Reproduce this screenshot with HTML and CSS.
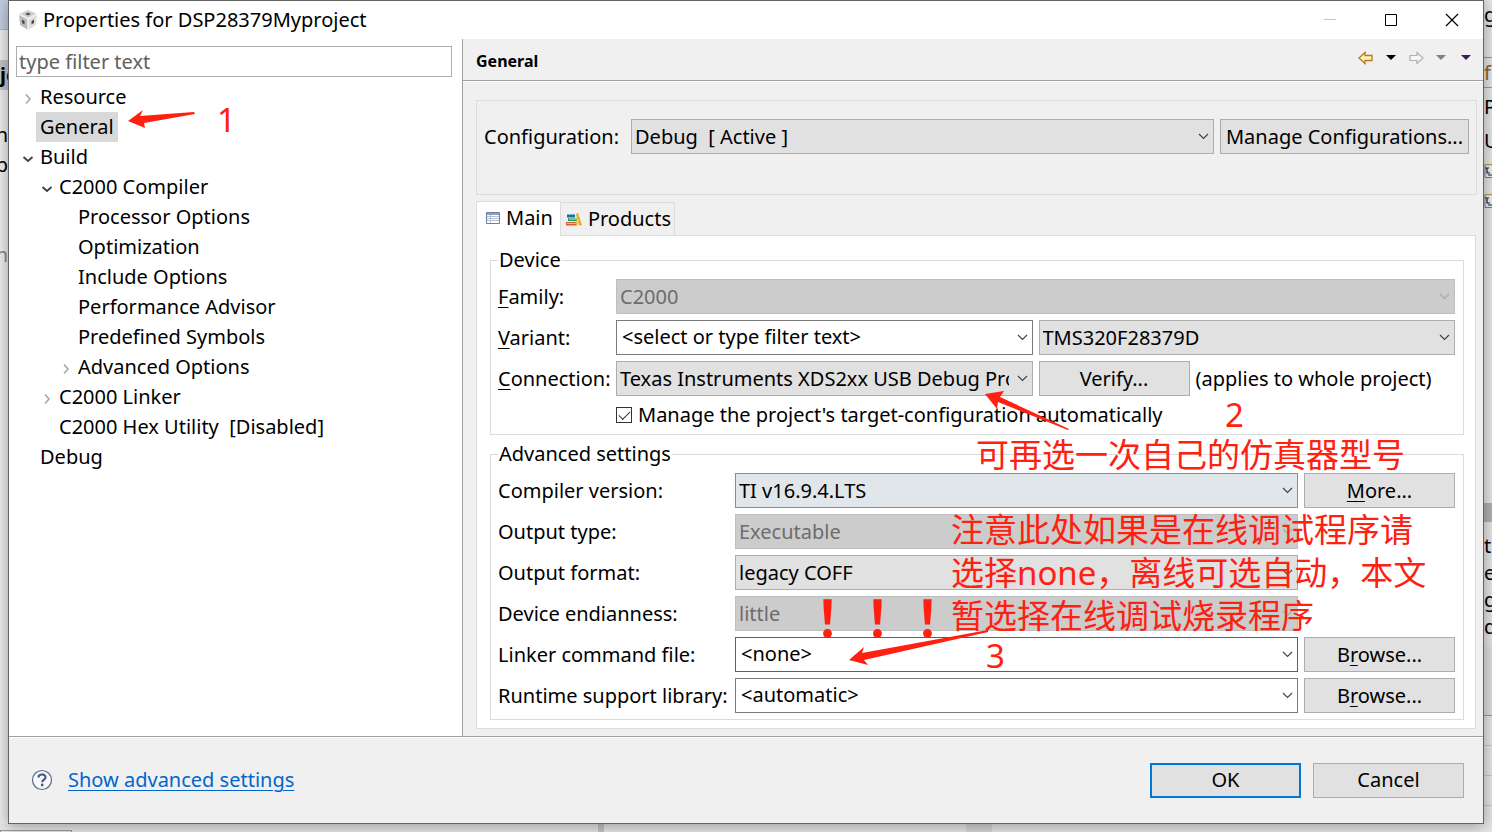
FILE: index.html
```html
<!DOCTYPE html>
<html lang="en">

<head>
    <meta charset="UTF-8">
    <meta name="viewport" content="width=device-width, initial-scale=1.0">
    <title>Properties for DSP28379Myproject</title>
    <link rel="stylesheet" href="styles.css">
</head>

<body>

    <!-- Shared icons -->
    <svg class="sprite" width="0" height="0" aria-hidden="true">
        <symbol id="chevron" viewBox="0 0 11 7">
            <path d="M1 1l4.500 4.500L10 1" fill="none" stroke="currentColor" stroke-width="1.200" />
        </symbol>
        <symbol id="tree-open" viewBox="0 0 12 12">
            <path d="M1.500 4L6 8l4.500-4" fill="none" stroke="#404040" stroke-width="1.800" />
        </symbol>
        <symbol id="tree-closed" viewBox="0 0 12 12">
            <path d="M4 1.500L8 6l-4 4.500" fill="none" stroke="#a6a6a6" stroke-width="1.600" />
        </symbol>
        <symbol id="caret" viewBox="0 0 10 5">
            <path d="M0 0h10L5 5z" fill="currentColor" />
        </symbol>
        <symbol id="file" viewBox="0 0 14 14">
            <path d="M1 .5h8l4 4v9H1z" fill="#e8edf6" stroke="#6b7fa8" />
            <path d="M1 .5h7l4 4" fill="none" stroke="#c49a3c" stroke-width="1.500" />
            <path d="M1 4h4M3 4v5h3M4 11h4" fill="none" stroke="#222" stroke-width="1.200" />
        </symbol>
    </svg>

    <!-- Window behind, left edge -->
    <div class="behind behind-left">
        <div class="strip-title"></div>
        <div class="strip-gap"></div>
        <div class="strip-row selected">je</div>
        <div class="strip-gap"></div>
        <div class="strip-row">n</div>
        <div class="strip-row">p</div>
        <div class="strip-gap tall"></div>
        <div class="strip-row muted">n</div>
    </div>

    <main class="dialog">
        <header class="titlebar">
            <svg class="app-icon" width="20" height="20" viewBox="0 0 20 20">
                <path d="M10 0l9 4-9 5-9-5z" fill="#d0d0d0" />
                <path d="M1 4l9 5v11l-8-5z" fill="#bcbcbc" />
                <path d="M19 4l-9 5v11l8-5z" fill="#dedede" />
                <path d="M10 2.500l3 1.500-3 1.500L7 4z" fill="#555" />
                <path d="M4 9.500l2.500 1.500v3.500L4 13z" fill="#4a4a4a" />
                <path d="M16 9.500L13.500 11v3.500L16 13z" fill="#4a4a4a" />
                <path d="M1 4l9 5 9-5M10 9v11" fill="none" stroke="#f2f2f2" stroke-width="1.500" />
            </svg>
            <h1>Properties for DSP28379Myproject</h1>
            <div class="window-buttons">
                <button type="button" aria-label="Minimize" disabled>
                    <svg width="14" height="14" viewBox="0 0 14 14"><path d="M1 6.500h12" stroke="#c4c4c4" /></svg>
                </button>
                <button type="button" aria-label="Maximize">
                    <svg width="14" height="14" viewBox="0 0 14 14"><path d="M1.500 1.500h11v11h-11z" fill="none" stroke="#000" /></svg>
                </button>
                <button type="button" aria-label="Close">
                    <svg width="14" height="14" viewBox="0 0 14 14"><path d="M1 1l12 12M13 1L1 13" stroke="#000" stroke-width="1.200" /></svg>
                </button>
            </div>
        </header>

        <div class="content">
            <nav class="sidebar">
                <input type="text" class="filter" placeholder="type filter text" aria-label="type filter text">
                <ul class="tree">
                    <li><svg width="12" height="12"><use href="#tree-closed" /></svg><a href="#resource">Resource</a></li>
                    <li><a href="#general" class="active">General</a></li>
                    <li><svg width="12" height="12"><use href="#tree-open" /></svg><a href="#build">Build</a></li>
                    <li class="level-1"><svg width="12" height="12"><use href="#tree-open" /></svg><a href="#compiler">C2000 Compiler</a></li>
                    <li class="level-2"><a href="#processor">Processor Options</a></li>
                    <li class="level-2"><a href="#optimization">Optimization</a></li>
                    <li class="level-2"><a href="#include">Include Options</a></li>
                    <li class="level-2"><a href="#performance">Performance Advisor</a></li>
                    <li class="level-2"><a href="#symbols">Predefined Symbols</a></li>
                    <li class="level-2"><svg width="12" height="12"><use href="#tree-closed" /></svg><a href="#advanced">Advanced Options</a></li>
                    <li class="level-1"><svg width="12" height="12"><use href="#tree-closed" /></svg><a href="#linker">C2000 Linker</a></li>
                    <li class="level-1"><a href="#hex">C2000 Hex Utility&nbsp; [Disabled]</a></li>
                    <li><a href="#debug">Debug</a></li>
                </ul>
            </nav>

            <section class="page">
                <div class="page-header">
                    <h2>General</h2>
                    <div class="history">
                        <button type="button" aria-label="Back">
                            <svg width="16" height="14" viewBox="0 0 16 14"><path d="M1 7l6-5.500v3h7v5H7v3z" fill="#fff3c4" stroke="#b87a14" stroke-width="1.300" /></svg>
                        </button>
                        <button type="button" class="drop" aria-label="Back history"><svg width="10" height="5"><use href="#caret" /></svg></button>
                        <button type="button" aria-label="Forward">
                            <svg width="16" height="14" viewBox="0 0 16 14"><path d="M15 7L9 1.500v3H2v5h7v3z" fill="#f6f6f6" stroke="#b0b0b0" stroke-width="1.200" /></svg>
                        </button>
                        <button type="button" class="drop grey" aria-label="Forward history"><svg width="10" height="5"><use href="#caret" /></svg></button>
                        <button type="button" class="drop purple" aria-label="Menu"><svg width="10" height="5"><use href="#caret" /></svg></button>
                    </div>
                </div>

                <div class="configuration">
                    <label for="configuration">Configuration:</label>
                    <div class="combo">
                        <select id="configuration"><option>Debug&nbsp; [ Active ]</option></select>
                        <svg width="11" height="7"><use href="#chevron" /></svg>
                    </div>
                    <button type="button" class="btn">Manage Configurations...</button>
                </div>

                <div class="tabs" role="tablist">
                    <button type="button" class="tab current" role="tab" aria-selected="true">
                        <svg width="14" height="12" viewBox="0 0 14 12">
                            <path d="M.5.5h13v11H.5z" fill="#fff" stroke="#6c7fa0" />
                            <path d="M1 1h12v2H1z" fill="#8fa0bd" />
                            <path d="M1 4.500h12M1 6.500h12M1 8.500h12M4.500 3v8" stroke="#b4bfd0" />
                        </svg>
                        Main
                    </button>
                    <button type="button" class="tab" role="tab" aria-selected="false">
                        <svg width="16" height="13" viewBox="0 0 16 13">
                            <path d="M1 1.500h8v3H1z" fill="#1c6f9c" />
                            <path d="M2 5h9v3H2z" fill="#1f9a6b" />
                            <path d="M3 6h8" stroke="#c8ecd9" />
                            <path d="M0 9h11v3.500H0z" fill="#d2622c" />
                            <path d="M1 10.500h9" stroke="#f1b98e" />
                            <path d="M10 1l2-1 4 12-3 .5z" fill="#f0a81c" />
                            <path d="M12 6l-1 6" stroke="#f7cf4a" stroke-width="2" />
                        </svg>
                        Products
                    </button>
                </div>

                <div class="pane">
                    <fieldset class="device">
                        <legend>Device</legend>
                        <div class="grid">
                            <label for="family"><u>F</u>amily:</label>
                            <div class="combo wide">
                                <select id="family" disabled><option>C2000</option></select>
                                <svg width="11" height="7"><use href="#chevron" /></svg>
                            </div>

                            <label for="variant"><u>V</u>ariant:</label>
                            <div class="combo">
                                <input type="text" id="variant" value="&lt;select or type filter text&gt;">
                                <svg width="11" height="7"><use href="#chevron" /></svg>
                            </div>
                            <div class="combo">
                                <select aria-label="Device variant"><option>TMS320F28379D</option></select>
                                <svg width="11" height="7"><use href="#chevron" /></svg>
                            </div>

                            <label for="connection"><u>C</u>onnection:</label>
                            <div class="combo">
                                <select id="connection"><option>Texas Instruments XDS2xx USB Debug Probe</option></select>
                                <svg width="11" height="7"><use href="#chevron" /></svg>
                            </div>
                            <div class="verify">
                                <button type="button" class="btn">Verify...</button>
                                <span>(applies to whole project)</span>
                            </div>

                            <label class="check">
                                <input type="checkbox" checked>
                                Manage the project's target-configuration automatically
                            </label>
                        </div>
                    </fieldset>

                    <fieldset class="advanced">
                        <legend>Advanced settings</legend>
                        <div class="grid">
                            <label for="compiler-version">Compiler version:</label>
                            <div class="combo hot">
                                <select id="compiler-version"><option>TI v16.9.4.LTS</option></select>
                                <svg width="11" height="7"><use href="#chevron" /></svg>
                            </div>
                            <button type="button" class="btn"><u>M</u>ore...</button>

                            <label for="output-type">Output type:</label>
                            <div class="combo">
                                <select id="output-type" disabled><option>Executable</option></select>
                                <svg width="11" height="7"><use href="#chevron" /></svg>
                            </div>

                            <label for="output-format">Output format:</label>
                            <div class="combo">
                                <select id="output-format"><option>legacy COFF</option></select>
                                <svg width="11" height="7"><use href="#chevron" /></svg>
                            </div>

                            <label for="endianness">Device endianness:</label>
                            <div class="combo">
                                <select id="endianness" disabled><option>little</option></select>
                                <svg width="11" height="7"><use href="#chevron" /></svg>
                            </div>

                            <label for="linker-file">Linker command file:</label>
                            <div class="combo focused">
                                <input type="text" id="linker-file" value="&lt;none&gt;">
                                <svg width="11" height="7"><use href="#chevron" /></svg>
                            </div>
                            <button type="button" class="btn">B<u>r</u>owse...</button>

                            <label for="runtime">Runtime support library:</label>
                            <div class="combo">
                                <input type="text" id="runtime" value="&lt;automatic&gt;">
                                <svg width="11" height="7"><use href="#chevron" /></svg>
                            </div>
                            <button type="button" class="btn">B<u>r</u>owse...</button>
                        </div>
                    </fieldset>
                </div>
            </section>
        </div>

        <footer class="actions">
            <svg width="22" height="22" viewBox="0 0 22 22">
                <circle cx="11" cy="11" r="9.500" fill="#f7f8fb" stroke="#5a6a8c" stroke-width="1.200" />
                <path d="M7.500 8.500C7.500 4.500 14.500 4.500 14.500 8.300c0 2.400-3.300 2.500-3.300 5" fill="none" stroke="#4c5d82" stroke-width="2.200" />
                <circle cx="11.200" cy="16" r="1.400" fill="#4c5d82" />
            </svg>
            <a href="#advanced-settings">Show advanced settings</a>
            <button type="button" class="btn primary">OK</button>
            <button type="button" class="btn">Cancel</button>
        </footer>
    </main>

    <!-- Window behind, right edge -->
    <div class="behind behind-right">
        <div class="strip-head">g</div>
        <div class="strip-row tab-text">f</div>
        <div class="strip-row first">P</div>
        <div class="strip-row">U</div>
        <div class="strip-row"><svg width="14" height="14"><use href="#file" /></svg></div>
        <div class="strip-row"><svg width="14" height="14"><use href="#file" /></svg></div>
        <div class="strip-fill"></div>
        <div class="strip-bar"></div>
        <div class="strip-log">
            <span>t</span>
            <span>e</span>
            <span>g</span>
            <span>d</span>
        </div>
        <div class="strip-panel"></div>
        <div class="strip-rows"><i></i><i></i><i></i></div>
    </div>

    <div class="behind behind-bottom">
        <div class="corner"></div>
        <div class="divider"></div>
        <div class="divider light"></div>
    </div>

    <!-- Notes drawn over the dialog -->
    <div class="notes">
        <svg class="arrows" width="1492" height="832" viewBox="0 0 1492 832">
            <path d="M128 121l15-11-3 6 54-4 1 2-51 9 1 5z" />
            <path d="M985 394l19-3-4 6 69 32-1 1-70-28-1 7z" />
            <path d="M849 660l15-13-2 6 126-23v2l-124 28 4 5z" />
        </svg>
        <span class="note number one">1</span>
        <span class="note number two">2</span>
        <span class="note number three">3</span>
        <p class="note probe">可再选一次自己的仿真器型号</p>
        <p class="note linker">注意此处如果是在线调试程序请<br>选择none，离线可选自动，本文<br>暂选择在线调试烧录程序</p>
        <span class="note bang">！！！</span>
    </div>

</body>

</html>
```

FILE: styles.css
```css
* {
    margin: 0;
    padding: 0;
    box-sizing: border-box;
}

body {
    font-family: 'Noto Sans', 'Noto Sans CJK SC', sans-serif;
    font-size: 20px;
    line-height: 30px;
    color: #000;
    background-color: #e6e6e6;
    display: grid;
    grid-template-columns: 8px minmax(0, 1fr) 8px;
    grid-template-rows: 1fr 8px;
    min-height: 100vh;
    position: relative;
    overflow: hidden;
}

button,
input,
select {
    font: inherit;
    color: inherit;
    border-radius: 0;
    outline: none;
}

.sprite {
    position: absolute;
}

/* Window behind */
.behind {
    overflow: hidden;
    white-space: nowrap;
}

.behind-left {
    background-color: #ececec;
    display: flex;
    flex-direction: column;
}

.behind-left .strip-row {
    display: flex;
    justify-content: flex-end;
}

.behind-left .strip-row.selected {
    justify-content: flex-start;
    background-color: #c4c4c4;
    font-weight: 700;
}

.strip-title {
    height: 30px;
    background-color: #c3cde0;
    border-bottom: 1px solid #a9b3c5;
}

.strip-gap {
    height: 30px;
}

.strip-gap.tall {
    height: 60px;
}

.strip-row {
    display: flex;
    align-items: center;
    height: 30px;
}

.strip-row.muted {
    color: #888;
}

.behind-right {
    background-color: #e4e4e4;
    display: flex;
    flex-direction: column;
}

.strip-row svg {
    flex: none;
}

.strip-head {
    height: 58px;
    border-bottom: 1px solid #999;
}

.strip-row.tab-text {
    color: #9a6020;
    border-bottom: 1px solid #999;
}

.strip-row.first {
    margin: 4px 0;
}

.strip-fill {
    height: 287px;
}

.strip-bar {
    height: 19px;
    background-color: #b0b0b0;
}

.strip-log {
    display: flex;
    flex-direction: column;
    padding-top: 10px;
    height: 125px;
    line-height: 27px;
}

.strip-panel {
    height: 69px;
    background-color: #dcdcdc;
    border-bottom: 1px solid #999;
}

.strip-rows i {
    display: block;
    height: 30px;
    border-bottom: 1px solid #c8c8c8;
}

.behind-bottom {
    grid-column: 1 / -1;
    display: flex;
}

.corner {
    width: 72px;
    height: 4px;
    margin-top: 6px;
    border: 1px solid #999;
}

.divider {
    margin-left: 526px;
    width: 6px;
    background-color: #c4c4c4;
}

.divider.light {
    margin-left: 362px;
    width: 26px;
    background-color: #d6d6d6;
}

/* Dialog */
.dialog {
    display: flex;
    flex-direction: column;
    background-color: #f0f0f0;
    border: 1px solid #646464;
    box-shadow: 0 2px 14px rgba(0, 0, 0, 0.35);
    position: relative;
}

.titlebar {
    display: flex;
    align-items: center;
    gap: 5px;
    height: 38px;
    padding: 0 1px 0 9px;
    background-color: #fff;
}

.titlebar h1 {
    font-size: 20px;
    font-weight: 400;
}

.window-buttons {
    display: flex;
    margin-left: auto;
}

.window-buttons button {
    width: 61px;
    height: 38px;
    border: none;
    background: none;
}

.content {
    display: flex;
    flex: 1;
}

/* Left tree */
.sidebar {
    width: 454px;
    padding: 7px 10px 0 7px;
    background-color: #fff;
    border-right: 1px solid #a0a0a0;
}

.filter {
    display: block;
    width: 100%;
    height: 31px;
    padding: 0 2px;
    border: 1px solid #adadb3;
}

.filter::placeholder {
    color: #606060;
    opacity: 1;
}

.tree {
    list-style: none;
    padding-top: 5px;
}

.tree li {
    display: grid;
    grid-template-columns: 20px auto;
    justify-content: start;
    align-items: center;
    height: 30px;
}

.tree li svg {
    margin-left: 6px;
    margin-top: 4px;
}

.tree li.level-1 {
    padding-left: 19px;
}

.tree li.level-2 {
    padding-left: 38px;
}

.tree a {
    grid-column: 2;
    padding: 0 4px;
    color: #000;
    text-decoration: none;
}

.tree a.active {
    background-color: #d9d9d9;
}

/* Right page */
.page {
    flex: 1;
    min-width: 0;
}

.page-header {
    display: flex;
    justify-content: space-between;
    align-items: center;
    height: 42px;
    padding: 2px 12px 0 13px;
    border-bottom: 1px solid #a0a0a0;
    box-shadow: 0 1px 0 #fff;
}

.page-header h2 {
    font-size: 16px;
    font-weight: 700;
}

.history {
    display: flex;
    align-items: center;
    gap: 12px;
    padding-bottom: 6px;
}

.history button {
    display: flex;
    border: none;
    background: none;
}

.history .grey {
    color: #808080;
}

.history .purple {
    color: #3c1a5c;
    margin-left: 3px;
}

.configuration {
    display: grid;
    grid-template-columns: 141px 1fr 249px;
    gap: 6px;
    align-items: center;
    margin: 19px 6px 0 13px;
    padding: 18px 7px 40px;
    border: 1px solid #dcdcdc;
}

label {
    white-space: nowrap;
}

u {
    text-decoration-thickness: 1px;
    text-underline-offset: 3px;
}

.btn {
    height: 35px;
    min-width: 151px;
    background-color: #e1e1e1;
    border: 1px solid #adadad;
    white-space: nowrap;
}

.btn.primary {
    border: 2px solid #0078d7;
}

/* Drop-downs: the arrow shares the cell of the field */
.combo {
    display: grid;
    grid-template-columns: minmax(0, 1fr);
    align-items: center;
    color: #000;
}

.combo > * {
    grid-area: 1 / 1;
}

.combo svg {
    justify-self: end;
    margin-right: 5px;
    color: #444;
    pointer-events: none;
}

.combo select,
.combo input {
    width: 100%;
    height: 35px;
    padding: 0 23px 0 3px;
    appearance: none;
    background-color: #e1e1e1;
    border: 1px solid #adadad;
}

.combo input {
    padding-left: 5px;
    padding-bottom: 2px;
    background-color: #fff;
    border-color: #7a7a7a;
}

.combo select:disabled {
    background-color: #ccc;
    border-color: #bfbfbf;
    color: #6d6d6d;
    opacity: 1;
}

.combo select:disabled + svg {
    color: #a8a8a8;
}

.combo.hot select {
    background-color: #e0e6ea;
    border-color: #6a94b8;
}

.combo.focused input {
    border-color: #0078d7;
}

.tabs {
    display: flex;
    align-items: flex-end;
    margin: 6px 0 0 13px;
}

.tab {
    display: flex;
    align-items: center;
    gap: 6px;
    height: 33px;
    padding: 0 3px 0 5px;
    background-color: #f0f0f0;
    border: 1px solid #dcdcdc;
    border-left: none;
    border-bottom: none;
}

.tab svg {
    flex: none;
}

.tab.current {
    height: 35px;
    padding: 0 7px 2px 9px;
    background-color: #fff;
    border-left: 1px solid #dcdcdc;
    margin-bottom: -1px;
    position: relative;
    z-index: 1;
}

.pane {
    display: flex;
    flex-direction: column;
    gap: 5px;
    margin: 0 7px 6px 13px;
    padding: 10px 11px 8px 13px;
    background-color: #fff;
    border: 1px solid #dcdcdc;
}

fieldset {
    min-width: 0;
    border: 1px solid #dcdcdc;
    padding: 5px 8px 6px 7px;
}

legend {
    padding: 0 1px;
    line-height: 28px;
}

.grid {
    display: grid;
    gap: 6px;
    align-items: center;
}

.device .grid {
    grid-template-columns: 112px minmax(0, 1fr) minmax(0, 1fr);
}

.advanced .grid {
    grid-template-columns: 231px minmax(0, 1fr) 151px;
}

.grid > label {
    grid-column: 1;
}

.combo.wide {
    grid-column: 2 / -1;
}

.verify {
    display: flex;
    align-items: center;
    gap: 6px;
    white-space: nowrap;
}

.grid > .check {
    grid-column: 2 / -1;
    display: flex;
    align-items: center;
    gap: 6px;
    line-height: 26px;
}

.check input {
    appearance: none;
    width: 16px;
    height: 16px;
    border: 1px solid #333;
    display: grid;
    place-items: center;
}

.check input:checked::before {
    content: '';
    width: 10px;
    height: 5px;
    border-left: 1px solid #333;
    border-bottom: 1px solid #333;
    transform: translateY(-1px) rotate(-45deg);
}

/* Bottom bar */
.actions {
    display: flex;
    align-items: center;
    gap: 12px;
    height: 87px;
    padding: 0 19px 0 22px;
    border-top: 1px solid #a0a0a0;
    box-shadow: inset 0 1px 0 #fff;
}

.actions a {
    margin-left: 3px;
    margin-right: auto;
    color: #0066cc;
    text-decoration-thickness: 1px;
    text-underline-offset: 3px;
}

/* Notes */
.notes {
    position: absolute;
    inset: 0;
    pointer-events: none;
}

.arrows {
    position: absolute;
    fill: #ff2010;
}

.note {
    position: absolute;
    color: #ff2010;
    font-size: 33px;
    line-height: 43px;
    white-space: nowrap;
}

.number {
    line-height: 34px;
}

.one {
    left: 217px;
    top: 103px;
}

.two {
    left: 1225px;
    top: 398px;
}

.three {
    left: 986px;
    top: 639px;
}

.probe {
    left: 976px;
    top: 433px;
}

.linker {
    left: 951px;
    top: 508px;
}

.bang {
    left: 815px;
    top: 594px;
    font-family: 'Noto Sans CJK SC', sans-serif;
    font-size: 50px;
    font-weight: 700;
}
```
